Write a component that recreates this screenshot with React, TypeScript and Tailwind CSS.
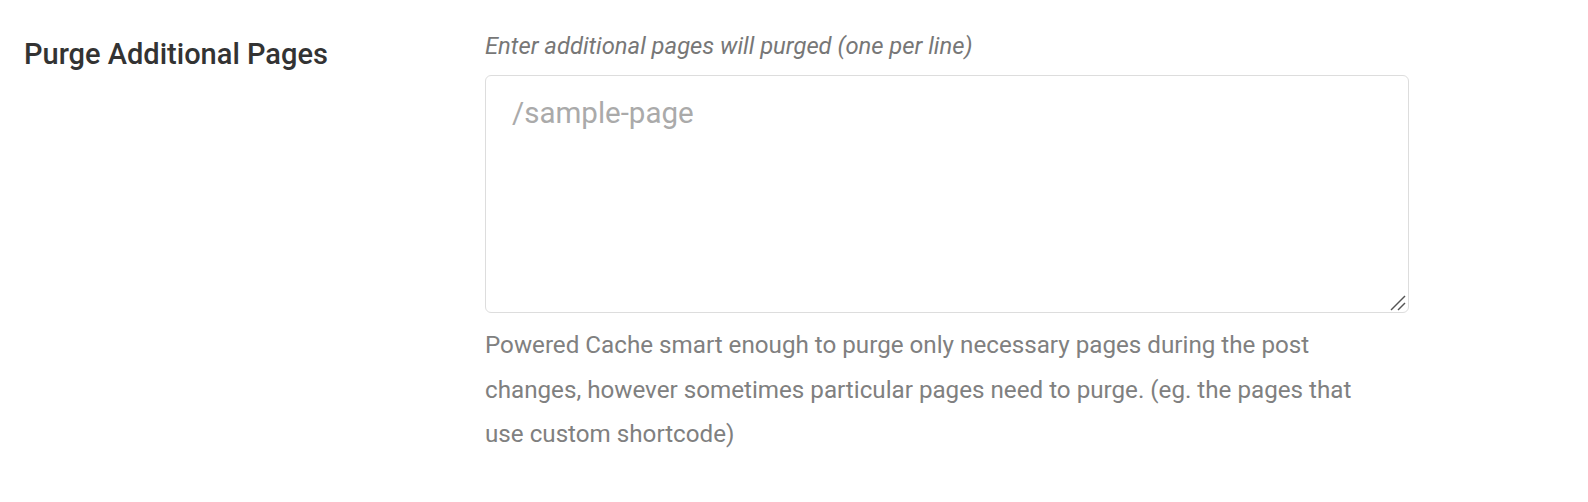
import { useState } from 'react';

export default function App() {
  const [pages, setPages] = useState('');

  return (
    <div className="min-h-screen bg-white font-['Roboto',sans-serif]">
      <div className="flex pl-6 pt-8">
        {/* Field label */}
        <div className="w-[461px] shrink-0 pt-[4px]">
          <label
            htmlFor="purge-pages"
            className="block text-[29px] font-medium leading-[36px] text-[#333]"
          >
            Purge Additional Pages
          </label>
        </div>

        {/* Field body */}
        <div className="flex w-[924px] flex-col">
          <p className="text-[23.8px] italic leading-[28px] text-[#777]">
            Enter additional pages will purged (one per line)
          </p>
          <div className="relative mt-[15px]">
            <textarea
              id="purge-pages"
              value={pages}
              onChange={(e) => setPages(e.target.value)}
              placeholder="/sample-page"
              className="block h-[238px] w-full resize-none rounded-md border border-[#ddd] bg-white px-[26px] py-[21px] text-[29.5px] leading-[33px] text-[#333] outline-none placeholder:text-[#aaa]"
            />
            {/* resize grip */}
            <svg
              className="pointer-events-none absolute bottom-[2px] right-[3px] h-4 w-4"
              viewBox="0 0 16 16"
              fill="none"
              stroke="#555"
              strokeWidth="1.5"
            >
              <path d="M1 15 L15 1" />
              <path d="M8 15 L15 8" />
            </svg>
          </div>
          <p className="mt-[10px] w-[905px] text-[24.2px] leading-[44.5px] text-[#808080]">
            Powered Cache smart enough to purge only necessary pages during the post
            changes, however sometimes particular pages need to purge. (eg. the pages
            that use custom shortcode)
          </p>
        </div>
      </div>
    </div>
  );
}
